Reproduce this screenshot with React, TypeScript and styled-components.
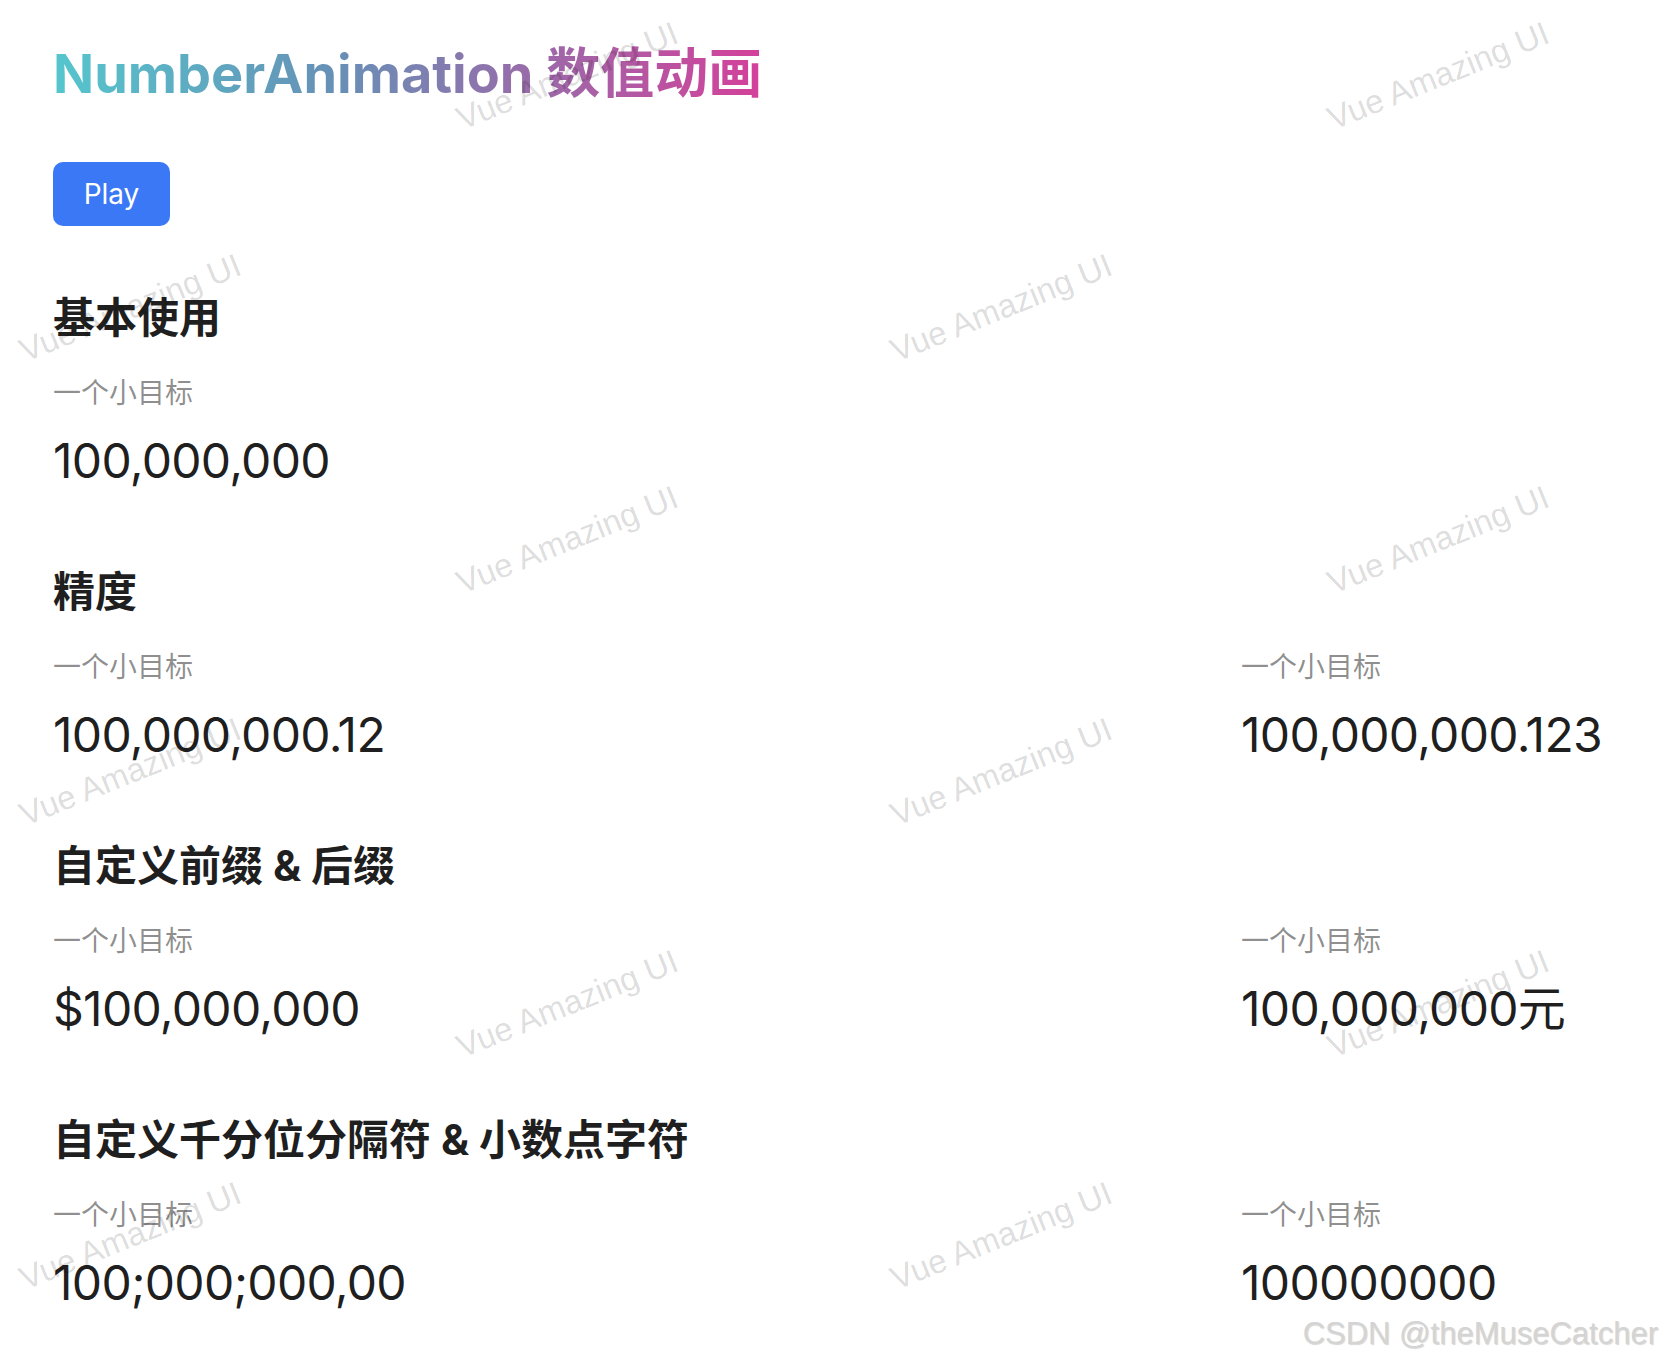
import * as React from "react";
import styled, {createGlobalStyle} from "styled-components";

const GlobalStyle = createGlobalStyle`
  html, body {
    margin: 0;
    padding: 0;
    background: #ffffff;
  }
  body {
    font-family: Inter, "Noto Sans CJK SC", sans-serif;
    color: rgba(0, 0, 0, 0.88);
  }
`;

const Page = styled.div`
  position: relative;
  min-height: 1364px;
  overflow: hidden;
  padding: 42px 53px 0;
  box-sizing: border-box;
`;

const Title = styled.h1`
  display: inline-block;
  margin: 0 0 56px;
  font-size: 54px;
  line-height: 64px;
  font-weight: 700;
  background-image: linear-gradient(90deg, #55c6cd 0%, #6790b6 40%, #d4409a 100%);
  -webkit-background-clip: text;
  background-clip: text;
  color: transparent;
`;

const PlayButton = styled.button`
  display: block;
  width: 117px;
  height: 64px;
  padding: 0;
  border: none;
  border-radius: 10px;
  background: #3b78f6;
  color: #ffffff;
  font-family: Inter, sans-serif;
  font-size: 28px;
  cursor: pointer;
`;

const Section = styled.section<{$first?: boolean}>`
  margin-top: ${(p) => (p.$first ? "64px" : "71px")};
`;

const Heading = styled.h2`
  margin: 0 0 25px;
  font-size: 42px;
  line-height: 56px;
  font-weight: 700;
  color: rgba(0, 0, 0, 0.88);
`;

const StatRow = styled.div`
  display: grid;
  grid-template-columns: 1188px 1fr;
`;

const Stat = styled.div`
  display: flex;
  flex-direction: column;
`;

const StatLabel = styled.div`
  margin-bottom: 14px;
  font-size: 28px;
  line-height: 44px;
  color: rgba(0, 0, 0, 0.45);
`;

const StatValue = styled.div`
  font-size: 48px;
  line-height: 64px;
  letter-spacing: -0.7px;
  color: rgba(0, 0, 0, 0.88);
  white-space: nowrap;
`;

const WatermarkLayer = styled.div`
  position: absolute;
  inset: 0;
  padding-top: 102px;
  pointer-events: none;
  display: flex;
  flex-direction: column;
`;

const WatermarkRow = styled.div<{$shift: number}>`
  display: flex;
  gap: 633px;
  height: 232px;
  flex-shrink: 0;
  padding-left: ${(p) => p.$shift}px;
`;

const Mark = styled.span`
  flex-shrink: 0;
  width: 238px;
  height: 33px;
  font-family: "Liberation Sans", Arial, sans-serif;
  font-size: 33px;
  line-height: 33px;
  white-space: nowrap;
  color: rgba(0, 0, 0, 0.15);
  transform-origin: 0 100%;
  transform: rotate(-22deg);
`;

const SiteStamp = styled.div`
  position: absolute;
  right: 4px;
  bottom: 15px;
  font-family: "Liberation Sans", Arial, sans-serif;
  font-size: 31px;
  line-height: 31px;
  color: #d4d4d4;
  text-shadow: 1px 1px 1px rgba(0, 0, 0, 0.16);
  pointer-events: none;
`;

const sections = [
  {title: "基本使用", values: ["100,000,000"]},
  {title: "精度", values: ["100,000,000.12", "100,000,000.123"]},
  {title: "自定义前缀 & 后缀", values: ["$100,000,000", "100,000,000元"]},
  {title: "自定义千分位分隔符 & 小数点字符", values: ["100;000;000,00", "100000000"]},
];

const App: React.FC = () => {
  return (
    <React.Fragment>
      <GlobalStyle/>
      <Page>
        <Title>NumberAnimation 数值动画</Title>
        <PlayButton>Play</PlayButton>
        {sections.map((s, i) => (
          <Section key={s.title} $first={i === 0}>
            <Heading>{s.title}</Heading>
            <StatRow>
              {s.values.map((v) => (
                <Stat key={v}>
                  <StatLabel>一个小目标</StatLabel>
                  <StatValue>{v}</StatValue>
                </Stat>
              ))}
            </StatRow>
          </Section>
        ))}
        <WatermarkLayer>
          {[0, 1, 2, 3, 4, 5].map((r) => (
            <WatermarkRow key={r} $shift={r % 2 === 0 ? 464 : 27}>
              <Mark>Vue Amazing UI</Mark>
              <Mark>Vue Amazing UI</Mark>
            </WatermarkRow>
          ))}
        </WatermarkLayer>
        <SiteStamp>CSDN @theMuseCatcher</SiteStamp>
      </Page>
    </React.Fragment>
  );
};

export default App;
